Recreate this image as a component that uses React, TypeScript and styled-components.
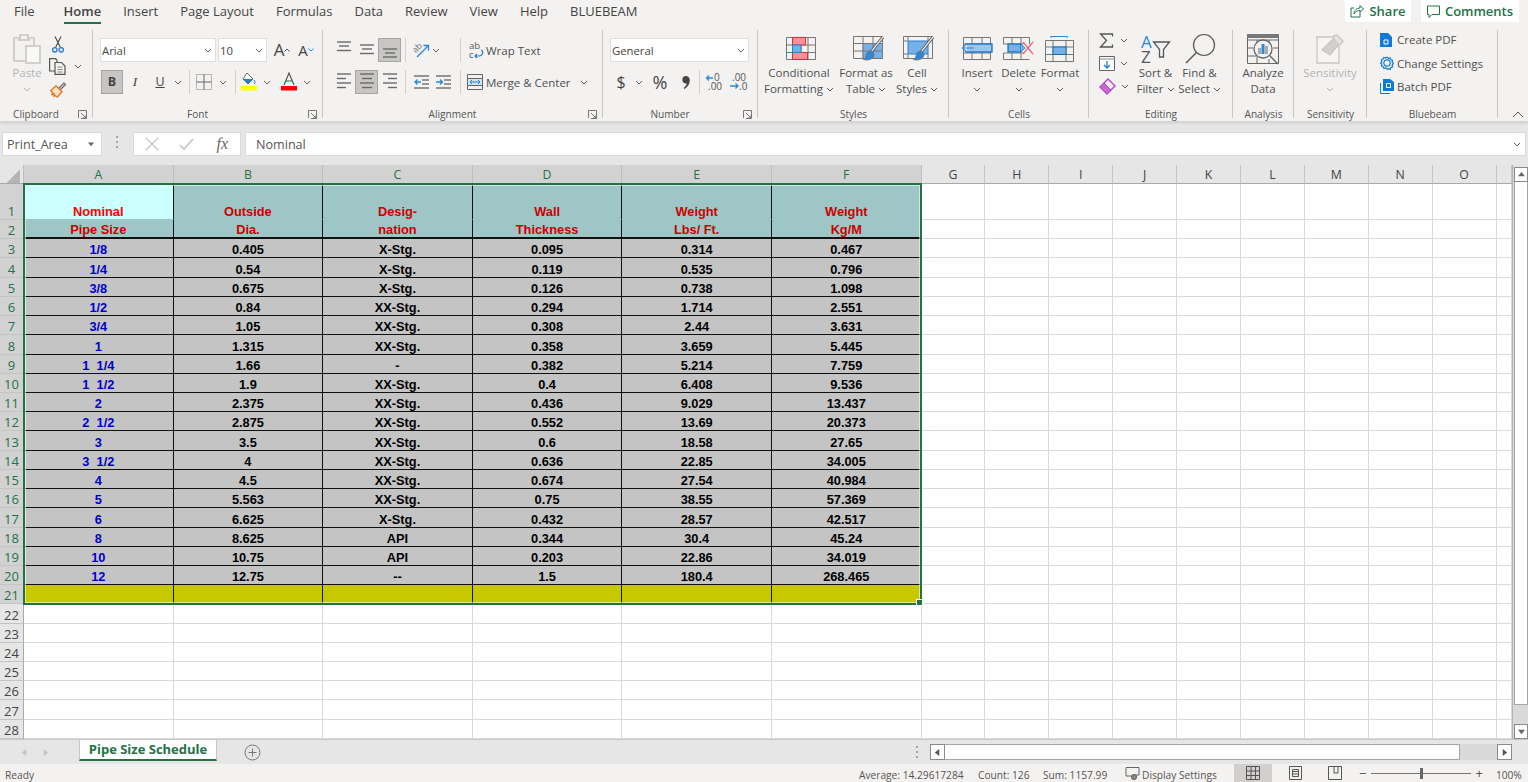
import React from "react";
import styled, { createGlobalStyle } from "styled-components";

const UI = `"Open Sans", "Noto Sans", "Liberation Sans", sans-serif`;
const GREEN = "#217346";
const INK = "#4a4a4a";

const Global = createGlobalStyle`
  html, body { margin: 0; padding: 0; background: #e6e6e6; }
  * { box-sizing: border-box; }
`;

const Page = styled.div`
  width: 1528px; height: 782px; overflow: hidden; display: flex; flex-direction: column;
  font-family: ${UI}; color: ${INK}; background: #e6e6e6;
`;

/* ---------- title tabs ---------- */
const TabStrip = styled.div`
  height: 24px; background: #f3f2f1; display: flex; padding: 0 9px 0 14px; align-items: flex-start;
`;
const MenuTab = styled.div<{ $active?: boolean; $gap: number }>`
  height: 24px; line-height: 23px; font-size: 13px; margin-right: ${p => p.$gap}px; color: #444;
  font-weight: ${p => (p.$active ? 600 : 400)};
  border-bottom: ${p => (p.$active ? `2px solid ${GREEN}` : "none")};
`;
const ShareBtn = styled.div<{ $w: number; $ml: string }>`
  width: ${p => p.$w}px; height: 22px; margin-left: ${p => p.$ml}; background: #fff; color: ${GREEN};
  font-weight: 600; font-size: 13px; display: flex; align-items: center; justify-content: center; gap: 5px;
`;

/* ---------- ribbon ---------- */
const Ribbon = styled.div`
  height: 97px; display: flex; background: #f3f2f1; box-shadow: 0 2px 3px rgba(0,0,0,.1); position: relative;
`;
const Group = styled.div<{ $w: number }>`
  width: ${p => p.$w}px; flex: none; display: flex; flex-direction: column; position: relative;
  &::after { content: ""; position: absolute; right: 0; top: 6px; bottom: 3px; width: 1px; background: #c8c6c4; }
`;
const GroupBody = styled.div<{ $pl?: number }>`
  flex: 1; display: flex; padding-left: ${p => p.$pl ?? 0}px; min-height: 0;
`;
const RowsBody = styled.div<{ $pl: number }>`
  flex: 1; display: flex; flex-direction: column; gap: 8px; padding: 14px 0 0 ${p => p.$pl}px;
`;
const Row = styled.div`
  display: flex; align-items: center; height: 24px;
`;
const LabelRow = styled.div`
  height: 15px; display: flex; align-items: center; padding-top: 1px; flex: none;
`;
const GroupLabel = styled.div`
  flex: 1; text-align: center; font-size: 10.1px; line-height: 14px; color: #555;
`;
const LauncherSlot = styled.div`
  width: 21px; display: flex; justify-content: center; flex: none;
`;
const Tool = styled.div<{ $w: number; $on?: boolean; $ml?: number }>`
  width: ${p => p.$w}px; height: 24px; flex: none; margin-left: ${p => p.$ml ?? 0}px; display: flex; align-items: center; justify-content: center;
  background: ${p => (p.$on ? "#c8c6c4" : "transparent")};
  outline: ${p => (p.$on ? "1px solid #a6a6a6" : "none")}; outline-offset: -1px;
`;
const Caret = styled.div<{ $ml?: number; $w?: number }>`
  width: ${p => p.$w ?? 10}px; flex: none; margin-left: ${p => p.$ml ?? 0}px; display: flex; justify-content: center;
`;
const Divider = styled.div<{ $ml: number; $mr: number }>`
  width: 1px; height: 24px; background: #d2d0ce; flex: none; margin: 0 ${p => p.$mr}px 0 ${p => p.$ml}px;
`;
const ComboBox = styled.div<{ $w: number; $ml?: number }>`
  width: ${p => p.$w}px; height: 24px; flex: none; margin-left: ${p => p.$ml ?? 0}px; background: #fff; border: 1px solid #e1dfdd;
  display: flex; align-items: center; justify-content: space-between; padding: 0 3px 0 1px;
  font-size: 11.3px; color: #444;
`;
const LetterGlyph = styled.span<{ $size: number; $serif?: boolean; $bold?: boolean; $italic?: boolean; $under?: boolean }>`
  font-family: ${p => (p.$serif ? `"Liberation Serif", serif` : UI)}; font-size: ${p => p.$size}px;
  font-weight: ${p => (p.$bold ? 700 : 400)}; font-style: ${p => (p.$italic ? "italic" : "normal")};
  text-decoration: ${p => (p.$under ? "underline" : "none")}; color: #444; line-height: 20px;
`;
const InlineText = styled.span<{ $ml?: number }>`
  font-size: 11.5px; color: #4f4f4f; margin-left: ${p => p.$ml ?? 0}px; white-space: nowrap;
`;
const BigBtn = styled.div<{ $w: number; $off?: boolean }>`
  width: ${p => p.$w}px; flex: none; display: flex; flex-direction: column; align-items: center; padding-top: 8px;
  color: ${p => (p.$off ? "#b4b4b4" : "#505050")};
`;
const BigIcon = styled.div<{ $dx?: number }>`
  height: 33px; display: flex; align-items: center; justify-content: center; flex: none; padding-left: ${p => (p.$dx ?? 0) * 2}px;
`;
const BigLine = styled.div`
  height: 16px; line-height: 16px; font-size: 11.5px; white-space: nowrap; display: flex; align-items: center; gap: 3px;
`;
const SmallStack = styled.div<{ $gap: number; $pt: number; $ml?: number; $w?: number }>`
  display: flex; flex-direction: column; gap: ${p => p.$gap}px; padding-top: ${p => p.$pt}px; margin-left: ${p => p.$ml ?? 0}px; flex: none;
  ${p => (p.$w ? `width:${p.$w}px;` : "")}
`;
const StackItem = styled.div<{ $h?: number; $pl?: number }>`
  display: flex; align-items: center; height: ${p => p.$h ?? 22}px; padding-left: ${p => p.$pl ?? 0}px;
`;
const Collapse = styled.div`
  position: absolute; right: 4px; bottom: 3px;
`;

/* ---------- formula bar ---------- */
const FormulaArea = styled.div`
  height: 44px; background: #e6e6e6; display: flex; padding: 11px 2px 0 2px; flex: none; align-items: flex-start;
`;
const FieldBox = styled.div<{ $w?: number; $grow?: boolean; $ml: number }>`
  height: 24px; background: #fff; margin-left: ${p => p.$ml}px;
  ${p => (p.$w ? `width:${p.$w}px; flex:none;` : "")} ${p => (p.$grow ? "flex:1;" : "")}
  display: flex; align-items: center; justify-content: space-between; font-size: 12.6px; color: #555; border: 1px solid #dcdcdc;
`;
const NamePad = styled.span` padding-left: 4px; `;
const NameArrow = styled.span` padding-right: 7px; display: flex; `;
const Grip = styled.div`
  width: 2px; height: 14px; margin: 4px 0 0 14px; flex: none;
  background: repeating-linear-gradient(#a6a6a6 0 2px, transparent 2px 5px);
`;
const FxSlot = styled.div` flex: 1; display: flex; justify-content: center; align-items: center; `;
const FxText = styled.span`
  font-family: "Liberation Serif", serif; font-style: italic; font-size: 16px; color: #666;
`;
const FormulaText = styled.span` padding-left: 10px; `;
const EndArrow = styled.span` padding-right: 4px; display: flex; `;

/* ---------- sheet ---------- */
const SheetArea = styled.div`
  flex: 1; display: flex; min-height: 0; background: #fff;
`;
const SheetGrid = styled.div`
  width: 1513px; flex: none; display: grid; position: relative; overflow: hidden; border-right: 1px solid #b4b4b4;
  grid-template-columns: 24px repeat(6, 149.6px) repeat(9, 63.9px) 1fr;
  grid-template-rows: 19px 36px repeat(27, 19.22px);
`;
const Corner = styled.div`
  background: #e6e6e6 linear-gradient(135deg, transparent 52%, #b5b5b5 52%) no-repeat 6px 4px / 14px 14px;
  border-right: 1px solid #bdbdbd; border-bottom: 1px solid #a9a9a9;
`;
const ColHead = styled.div<{ $sel: boolean }>`
  background: ${p => (p.$sel ? "#d2d2d2" : "#e6e6e6")}; color: ${p => (p.$sel ? GREEN : "#444")};
  display: flex; align-items: center; justify-content: center; font-size: 12.3px;
  border-right: 1px solid ${p => (p.$sel ? "#bdbdbd" : "#c4c4c4")}; border-bottom: 1px solid #a9a9a9;
`;
const RowHead = styled.div<{ $sel: boolean }>`
  background: ${p => (p.$sel ? "#d2d2d2" : "#e6e6e6")}; color: ${p => (p.$sel ? GREEN : "#444")};
  display: flex; align-items: flex-end; justify-content: center; font-size: 13px; line-height: 16px;
  border-right: 1px solid #a9a9a9; border-bottom: 1px solid #c4c4c4;
`;
const DataCell = styled.div<{ $bg: string; $ink: string; $thick?: boolean; $rowEnd?: string }>`
  background: ${p => p.$bg}; color: ${p => p.$ink};
  font: 700 12.8px/15px "Liberation Sans", Arial, sans-serif; white-space: pre;
  display: flex; align-items: flex-end; justify-content: center;
  border-bottom: ${p => (p.$thick ? 2 : 1)}px solid ${p => p.$rowEnd ?? "#111"};
  border-right: 1.6px solid #111;
  min-width: 0; min-height: 0;
`;
const EmptyCell = styled.div`
  background: #fff; border-right: 1px solid #d9d9d9; border-bottom: 1px solid #d9d9d9;
`;
const Selection = styled.div`
  position: absolute; left: 23px; top: 18px; width: 899px; height: 422px; border: 2px solid ${GREEN};
  box-shadow: inset 0 0 0 1px rgba(255,255,255,.55); pointer-events: none;
  &::after {
    content: ""; position: absolute; right: -3px; bottom: -3px; width: 5px; height: 5px; background: ${GREEN}; border: 1px solid #fff;
  }
`;
const VScroll = styled.div`
  flex: 1; background: #d9d9d9; display: flex; flex-direction: column; padding-left: 1px;
`;
const VCap = styled.div`
  height: 2px; flex: none; background: #e6e6e6;
`;
const ScrollBtn = styled.div`
  height: 15px; flex: none; background: #fff; border: 1px solid #8a8a8a; display: flex; align-items: center; justify-content: center;
`;
const VThumb = styled.div`
  height: 523px; flex: none; background: #fff; border: 1px solid #a6a6a6; border-top: none;
`;
const VGap = styled.div` flex: 1; `;

/* ---------- sheet bar ---------- */
const SheetBar = styled.div`
  height: 25px; flex: none; background: #e6e6e6; display: flex; align-items: flex-start; border-top: 1px solid #c8c8c8;
`;
const NavArrows = styled.div`
  width: 79px; height: 24px; flex: none; display: flex; gap: 14px; align-items: center; padding-left: 21px;
`;
const SheetTab = styled.div`
  width: 138px; height: 21px; background: #fff; color: ${GREEN}; font-weight: 700; font-size: 13px; text-align: center; line-height: 19px;
  border-bottom: 2px solid ${GREEN}; border-left: 1px solid #c8c8c8; border-right: 1px solid #c8c8c8; flex: none;
`;
const AddSheet = styled.div`
  margin: 4px 0 0 27px; flex: none; display: flex;
`;
const BarGrip = styled.div`
  width: 2px; height: 13px; margin: 6px 0 0 655px; flex: none;
  background: repeating-linear-gradient(#a6a6a6 0 2px, transparent 2px 5px);
`;
const HScroll = styled.div`
  margin: 4px 0 0 12px; width: 582px; height: 16px; display: flex; flex: none;
`;
const HBtn = styled.div`
  width: 15px; background: #fff; border: 1px solid #8a8a8a; display: flex; align-items: center; justify-content: center; flex: none;
`;
const HThumb = styled.div` width: 515px; background: #fff; border: 1px solid #a6a6a6; border-left: none; flex: none; `;
const HTrack = styled.div` flex: 1; background: #d9d9d9; `;

/* ---------- status bar ---------- */
const Status = styled.div`
  height: 18px; flex: none; background: #f3f2f1; display: flex; align-items: center; font-size: 10.2px; color: #555; padding-left: 5px;
`;
const StatusItem = styled.span<{ $w?: number; $ml?: number; $big?: boolean }>`
  ${p => (p.$w ? `width:${p.$w}px;` : "")} margin-left: ${p => p.$ml ?? 0}px; flex: none; white-space: nowrap; padding-top: ${p => (p.$big ? 1 : 4)}px;
  ${p => (p.$big ? "font-size: 13px; line-height: 15px;" : "")}
`;
const ViewBtn = styled.div<{ $on?: boolean; $w: number; $ml?: number }>`
  width: ${p => p.$w}px; margin-left: ${p => p.$ml ?? 0}px; height: 18px; flex: none; display: flex; align-items: center; justify-content: center;
  background: ${p => (p.$on ? "#d2d0ce" : "transparent")};
`;
const Slider = styled.div`
  width: 100px; height: 1px; background: #777; margin-left: 5px; flex: none; position: relative;
  &::after { content: ""; position: absolute; left: 49px; top: -5px; width: 3px; height: 11px; background: #666; }
`;
const Svg = styled.svg` display: block; flex: none; overflow: visible; `;

/* ---------- icons ---------- */
const Chevron = ({ c = "#605e5c" }: { c?: string }) => (
  <Svg width="8" height="5" viewBox="0 0 8 5"><path d="M1 1l3 3 3-3" fill="none" stroke={c} strokeWidth="1" /></Svg>
);
const Launcher = () => (
  <Svg width="9" height="9" viewBox="0 0 9 9" fill="none" stroke="#777"><path d="M.5 8V.5H8.5V8.5H3M3 3l5 5M8 5v3H5" /></Svg>
);
const PasteIcon = () => (
  <Svg width="28" height="30" viewBox="0 0 28 30" fill="none" stroke="#c8c6c4" strokeWidth="1.600">
    <path d="M14 27H1V4h5M16 4h5v7" />
    <path d="M7 4V1h8v3l1 2H6z" fill="#f3f2f1" />
    <rect x="13" y="12" width="14" height="17" fill="#f8f8f7" />
  </Svg>
);
const CutIcon = () => (
  <Svg width="12" height="17" viewBox="0 0 12 17" fill="none">
    <path d="M3 .5l5.500 11M9 .5L3.500 11.500" stroke="#444" strokeWidth="1.100" />
    <circle cx="2.800" cy="13.800" r="2.200" stroke="#2b7cd3" strokeWidth="1.300" />
    <circle cx="9.200" cy="13.800" r="2.200" stroke="#2b7cd3" strokeWidth="1.300" />
  </Svg>
);
const CopyIcon = () => (
  <Svg width="17" height="17" viewBox="0 0 17 17" fill="none" stroke="#555" strokeWidth="1.200">
    <path d="M6 13H.6V.6h6l1.500 2V4" />
    <path d="M6 4.500h6.500l3.500 3.500v8.400H6z" fill="#f3f2f1" />
    <path d="M8.500 9h5M8.500 11.500h5M8.500 14h5" stroke="#888" />
  </Svg>
);
const PainterIcon = () => (
  <Svg width="16" height="16" viewBox="0 0 16 16" fill="none">
    <path d="M.8 8.500L6 4l6 5.500L7.500 15 5 13.500l-1 .5.300-2-2.300.500.700-2z" fill="#fbe3c7" stroke="#e8761f" strokeWidth="1.400" />
    <path d="M9 6l5-5 1.500 1.500-5 5" stroke="#666" strokeWidth="1.200" />
  </Svg>
);
const BordersIcon = () => (
  <Svg width="16" height="16" viewBox="0 0 16 16" fill="none">
    <path d="M.5.5h15v15H.5z" stroke="#b5b5b5" />
    <path d="M8 .5v15M.5 8h15" stroke="#666" />
  </Svg>
);
const FillIcon = () => (
  <Svg width="16" height="18" viewBox="0 0 16 18" fill="none">
    <path d="M6 0l6 6-5 5-5-5z" fill="#fff" stroke="#666" />
    <path d="M2 6h10l-5 5z" fill="#2b7cd3" />
    <path d="M13 7c1.500 2 1.500 3.500 0 4" stroke="#2b7cd3" />
    <rect x="0" y="13" width="16" height="4.500" fill="#ffff00" />
  </Svg>
);
const FontColorIcon = () => (
  <Svg width="16" height="18" viewBox="0 0 16 18" fill="none">
    <path d="M3 12L8 0l5 12M5 8h6" stroke="#555" strokeWidth="1.200" />
    <rect y="13" width="16" height="4.500" fill="#ff0000" />
  </Svg>
);
const TextLines = ({ rows }: { rows: [number, number, number][] }) => (
  <Svg width="16" height="18" viewBox="0 0 16 18" fill="none" stroke="#6a6a6a" strokeWidth="1.400">
    {rows.map(([a, b, y]) => <path key={y} d={`M${a} ${y}H${b}`} />)}
  </Svg>
);
const OrientIcon = () => (
  <Svg width="17" height="16" viewBox="0 0 17 16" fill="none">
    <text x="0" y="9" fontSize="8.500" fontFamily="Open Sans" fill="#666" transform="rotate(-45 4 7)">ab</text>
    <path d="M4 15L15 4M10.500 3.500H15.500V8.500" stroke="#2b88d8" strokeWidth="1.300" />
  </Svg>
);
const WrapIcon = () => (
  <Svg width="15" height="20" viewBox="0 0 15 20" fill="none">
    <text x="0" y="9" fontSize="9.500" fontFamily="Open Sans" fill="#555">ab</text>
    <text x="0" y="18" fontSize="9.500" fontFamily="Open Sans" fill="#555">c</text>
    <path d="M12 10c3 1 2 6-2 6H6M8 14l-2 2 2 2" stroke="#2b7cd3" strokeWidth="1.200" />
  </Svg>
);
const IndentIcon = ({ flip }: { flip?: boolean }) => (
  <Svg width="15" height="14" viewBox="0 0 15 14" fill="none">
    <path d="M0 1h15M8 5h7M8 9h7M0 13h15" stroke="#777" strokeWidth="1.300" />
    <path d={flip ? "M0 7h6M4 4.500L6.500 7 4 9.500" : "M7 7H1M3.500 4.500L1 7l2.500 2.500"} stroke="#2b88d8" strokeWidth="1.400" />
  </Svg>
);
const MergeIcon = () => (
  <Svg width="16" height="16" viewBox="0 0 16 16" fill="none">
    <path d="M.5.5h15v15H.5zM.5 4.500h15M.5 11.500h15" stroke="#666" />
    <rect x="1" y="5" width="14" height="6" fill="#cfe4f7" />
    <path d="M3 8h10M5 6L3 8l2 2M11 6l2 2-2 2" stroke="#2b7cd3" />
  </Svg>
);
const CommaIcon = () => (
  <Svg width="8" height="13" viewBox="0 0 8 13"><path d="M3.800 0C6.200 0 7.800 1.700 7.800 4.500 7.800 8 5.800 11 2.500 13L1.600 12C3.500 10.500 4.600 9 4.800 7.500 2.300 7.800.3 6.300.3 3.800.3 1.500 1.800 0 3.800 0z" fill="#444" /></Svg>
);
const DecimalIcon = ({ more }: { more?: boolean }) => (
  <Svg width="18" height="18" viewBox="0 0 18 18" fill="none">
    {more ? (
      <>
        <text x="9" y="8" fontSize="10" fontFamily="Open Sans" fill="#555">0</text>
        <text x="3" y="17" fontSize="10" fontFamily="Open Sans" fill="#555">.00</text>
        <path d="M8 5H1.500M4 2.500L1.500 5 4 7.500" stroke="#2b88d8" strokeWidth="1.300" />
      </>
    ) : (
      <>
        <text x="3" y="8" fontSize="10" fontFamily="Open Sans" fill="#555">.00</text>
        <text x="10" y="17" fontSize="10" fontFamily="Open Sans" fill="#555">.0</text>
        <path d="M1 13h8M6.500 10.500L9 13l-2.500 2.500" stroke="#2b88d8" strokeWidth="1.300" />
      </>
    )}
  </Svg>
);
const CondIcon = () => (
  <Svg width="30" height="24" viewBox="0 0 30 24" fill="none" stroke="#777">
    <path d="M.5.500h29v22H.5zM.5 8h29M.5 15.500h29M8 .500v22M15 .500v22M22 .500v22" />
    <rect x="6.500" y=".500" width="13" height="7.500" fill="#ff8f94" stroke="#d13438" />
    <rect x="6.500" y="15.500" width="15" height="7" fill="#ff8f94" stroke="#d13438" />
    <rect x="6.500" y="8" width="8.500" height="7.500" fill="#75b0e6" stroke="#2b7cd3" />
  </Svg>
);
const Brush = () => (
  <>
    <path d="M30 1L18 16" stroke="#666" strokeWidth="3" />
    <path d="M30 1L18 16" stroke="#fff" strokeWidth="1.200" />
    <path d="M18 15c-3 0-5 2-5 5 0 2-2 3-3 3 3 2 10 1 11-4 0-2-1-4-3-4z" fill="#2b88d8" />
  </>
);
const TableIcon = () => (
  <Svg width="32" height="26" viewBox="0 0 32 26" fill="none" stroke="#777">
    <rect x="9.500" y="7.500" width="20" height="15" fill="#75b0e6" stroke="none" />
    <path d="M.5.500h29v22H.5zM.5 7.500h29M.5 15h29M10 .500v22M20 .500v22" />
    <Brush />
  </Svg>
);
const CellStylesIcon = () => (
  <Svg width="32" height="26" viewBox="0 0 32 26" fill="none" stroke="#777">
    <rect x="5" y="5" width="20" height="13" fill="#75b0e6" stroke="#2b7cd3" />
    <path d="M.5.500h29v22H.5z" />
    <path d="M.5 5h4M.5 18h4M25 5h4M5 .500V5M25 .500V5M5 18v4M25 18v4" />
    <Brush />
  </Svg>
);
const InsertIcon = () => (
  <Svg width="32" height="24" viewBox="0 0 32 24" fill="none" stroke="#777">
    <path d="M2.500.500h27v22h-27zM2.500 7h27M2.500 16h27M11 .500v22M21 .500v22" />
    <rect x="5" y="7" width="26" height="8" fill="#9cc6ee" stroke="#106ebe" strokeWidth="1.300" />
    <path d="M13 11H1.500M6 6.500L1.500 11 6 15.500" stroke="#2b88d8" strokeWidth="1.200" fill="#f3f2f1" />
  </Svg>
);
const DeleteIcon = () => (
  <Svg width="31" height="24" viewBox="0 0 31 24" fill="none" stroke="#777">
    <path d="M.5.500h26M.5 22.500h26M.5.500V7M.5 16v6.500M9 .500V7M18 .500V7M9 16v6.500M18 16v6.500M26.500.500V7M.5 7h20M.5 16h20" />
    <rect x="5" y="7" width="13" height="8" fill="#75b0e6" stroke="#106ebe" strokeWidth="1.200" />
    <path d="M18 7l4 4-4 4" fill="#75b0e6" stroke="#2b88d8" />
    <path d="M20 5l10 12M30 5L20 17" stroke="#f0696c" strokeWidth="1.300" />
  </Svg>
);
const FormatIcon = () => (
  <Svg width="30" height="26" viewBox="0 0 30 26" fill="none" stroke="#777">
    <path d="M6 .500h16M6 0v2M22 0v2" stroke="#2b88d8" />
    <path d="M.5 4.500h28v21H.5zM.5 11h28M.5 18.500h28M8 4.500v21M21 4.500v21" />
    <rect x="8" y="11" width="13" height="7.500" fill="#75b0e6" stroke="#106ebe" />
  </Svg>
);
const SigmaIcon = () => (
  <Svg width="15" height="15" viewBox="0 0 15 15" fill="none"><path d="M13.500 3.500V1H1.500L7.500 7.500 1.500 14h12v-2.500" stroke="#555" strokeWidth="1.300" /></Svg>
);
const FillDownIcon = () => (
  <Svg width="16" height="15" viewBox="0 0 16 15" fill="none">
    <path d="M.5.500h15v14H.5z" stroke="#666" fill="#fff" />
    <path d="M.5 3h15" stroke="#888" />
    <path d="M8 5v7M5 9l3 3 3-3" stroke="#2b7cd3" strokeWidth="1.300" />
  </Svg>
);
const EraserIcon = () => (
  <Svg width="17" height="17" viewBox="0 0 17 17" fill="none">
    <path d="M1 9l8-8 7 7-8 8z" fill="#fbeefc" stroke="#b146c2" strokeWidth="1.400" />
    <path d="M1 9l4-4 7 7-4 4z" fill="#c768d4" stroke="#b146c2" />
  </Svg>
);
const SortIcon = () => (
  <Svg width="29" height="28" viewBox="0 0 29 28" fill="none">
    <text x="0" y="13" fontSize="17" fontFamily="Open Sans" fill="#2b88d8">A</text>
    <text x="0" y="28" fontSize="17" fontFamily="Open Sans" fill="#555">Z</text>
    <path d="M12.500 7h16l-6 7.500V22h-4v-7.500z" stroke="#555" strokeWidth="1.300" fill="#f3f2f1" />
  </Svg>
);
const FindIcon = () => (
  <Svg width="32" height="32" viewBox="0 0 32 32" fill="none" stroke="#555" strokeWidth="1.200">
    <circle cx="20" cy="12" r="10.500" />
    <path d="M12.500 19.500L2 30" strokeWidth="1.400" />
  </Svg>
);
const AnalyzeIcon = () => (
  <Svg width="34" height="32" viewBox="0 0 34 32" fill="none" stroke="#666">
    <path d="M1.500 1.500h31v29h-31zM1.500 7h31M1.500 15h6M27 15h5.500M1.500 23h10M11 7v4M23 7v4M11 24v6M23 26v4" />
    <path d="M1 1h32v4H1z" fill="#777" stroke="none" />
    <circle cx="17" cy="16" r="9" fill="#f3f2f1" strokeWidth="1.300" />
    <path d="M23.500 22.500L32 31" strokeWidth="1.300" />
    <rect x="12" y="15" width="3" height="6" fill="#aaa" stroke="none" />
    <rect x="15.500" y="11" width="3" height="10" fill="#2b88d8" stroke="none" />
    <rect x="19" y="13" width="3" height="8" fill="#aaa" stroke="none" />
  </Svg>
);
const SensitivityIcon = () => (
  <Svg width="28" height="30" viewBox="0 0 28 30" fill="none" stroke="#c8c6c4" strokeWidth="1.300">
    <path d="M1 3h18l4 4v22H1z" fill="#f6f5f4" />
    <path d="M6 16L18 4l8 3-12 14z" fill="#d2d0ce" />
    <path d="M17 2l4-1 6 6-3 4" fill="#e5e4e3" />
  </Svg>
);
const PdfIcon = () => (
  <Svg width="12" height="14" viewBox="0 0 12 14"><path d="M0 0h8l4 4v10H0z" fill="#0f7ad6" /><path d="M4 7h4v4H4z" fill="none" stroke="#fff" /></Svg>
);
const GearIcon = () => (
  <Svg width="14" height="14" viewBox="0 0 14 14" fill="none" stroke="#0f7ad6" strokeWidth="1.200">
    <circle cx="7" cy="7" r="3.200" />
    <path d="M7 1.200l1.400 1.200 1.800-.4.700 1.700 1.700.7-.4 1.800 1.200 1.400-1.200 1.400.4 1.800-1.700.700-.7 1.700-1.800-.4L7 13l-1.400-1.200-1.800.4-.7-1.700-1.700-.7.4-1.800L.6 7l1.200-1.400-.4-1.800 1.700-.7.7-1.700 1.800.4z" />
  </Svg>
);
const BatchIcon = () => (
  <Svg width="14" height="15" viewBox="0 0 14 15" fill="none">
    <path d="M.5 4v10.500H10" stroke="#0f7ad6" />
    <path d="M3 0h7l4 3v9H3z" fill="#0f7ad6" />
    <path d="M6.500 4.500h4v4h-4z" stroke="#fff" />
  </Svg>
);
const ShareIcon = () => (
  <Svg width="14" height="14" viewBox="0 0 14 14" fill="none" stroke={GREEN}>
    <path d="M10 8v5H1V4h3" />
    <path d="M4 10c0-4 3-6 6-6V1.500l3.500 3.500L10 8V6.500C7.500 6.500 5.500 7.500 4 10z" />
  </Svg>
);
const CommentIcon = () => (
  <Svg width="13" height="13" viewBox="0 0 13 13" fill="none" stroke={GREEN}><path d="M.5 1h12v8.500H5l-3 3v-3H.5z" /></Svg>
);
const Cross = () => (
  <Svg width="14" height="14" viewBox="0 0 14 14"><path d="M1 1l12 12M13 1L1 13" stroke="#c4c4c4" strokeWidth="1.300" /></Svg>
);
const Check = () => (
  <Svg width="15" height="12" viewBox="0 0 15 12"><path d="M1 7l4 4 9-10" fill="none" stroke="#c4c4c4" strokeWidth="1.600" /></Svg>
);
const Tri = ({ d, c = "#666", s = 7 }: { d: "up" | "down" | "left" | "right"; c?: string; s?: number }) => {
  const pts = { up: "0,6 4,1 8,6", down: "0,2 8,2 4,7", left: "6,0 6,8 1,4", right: "2,0 2,8 7,4" }[d];
  return <Svg width={s} height={s} viewBox="0 0 8 8"><polygon points={pts} fill={c} /></Svg>;
};
const PlusCircle = () => (
  <Svg width="17" height="17" viewBox="0 0 17 17" fill="none" stroke="#777"><circle cx="8.500" cy="8.500" r="7.500" /><path d="M4.500 8.500h8M8.500 4.500v8" /></Svg>
);
const DisplayIcon = () => (
  <Svg width="15" height="15" viewBox="0 0 15 15" fill="none" stroke="#666">
    <path d="M1 10V1.500h13V9H9M1 10h6" />
    <circle cx="9" cy="11" r="2.600" fill="#888" />
  </Svg>
);
const NormalViewIcon = () => (
  <Svg width="14" height="14" viewBox="0 0 14 14" fill="none" stroke="#555"><path d="M.5.500h13v13H.5zM.5 5h13M.5 9.500h13M5 .500v13M9.500 .500v13" /></Svg>
);
const PageViewIcon = () => (
  <Svg width="13" height="14" viewBox="0 0 13 14" fill="none" stroke="#555"><path d="M.5.500h12v13H.5zM3.500 3.500h6v7h-6zM3.500 5.500h6M3.500 8h6" /></Svg>
);
const BreakViewIcon = () => (
  <Svg width="14" height="14" viewBox="0 0 14 14" fill="none" stroke="#555"><path d="M.5.500h13v13H.5zM6 .500v6.500h4V.500" /></Svg>
);

/* ---------- data ---------- */
const COLS = "ABCDEFGHIJKLMNO".split("");
const HEAD: [string, string][] = [
  ["Nominal", "Pipe Size"], ["Outside", "Dia."], ["Desig-", "nation"], ["Wall", "Thickness"], ["Weight", "Lbs/ Ft."], ["Weight", "Kg/M"],
];
const BODY: string[][] = [
  ["1/8", "0.405", "X-Stg.", "0.095", "0.314", "0.467"],
  ["1/4", "0.54", "X-Stg.", "0.119", "0.535", "0.796"],
  ["3/8", "0.675", "X-Stg.", "0.126", "0.738", "1.098"],
  ["1/2", "0.84", "XX-Stg.", "0.294", "1.714", "2.551"],
  ["3/4", "1.05", "XX-Stg.", "0.308", "2.44", "3.631"],
  ["1", "1.315", "XX-Stg.", "0.358", "3.659", "5.445"],
  ["1  1/4", "1.66", "-", "0.382", "5.214", "7.759"],
  ["1  1/2", "1.9", "XX-Stg.", "0.4", "6.408", "9.536"],
  ["2", "2.375", "XX-Stg.", "0.436", "9.029", "13.437"],
  ["2  1/2", "2.875", "XX-Stg.", "0.552", "13.69", "20.373"],
  ["3", "3.5", "XX-Stg.", "0.6", "18.58", "27.65"],
  ["3  1/2", "4", "XX-Stg.", "0.636", "22.85", "34.005"],
  ["4", "4.5", "XX-Stg.", "0.674", "27.54", "40.984"],
  ["5", "5.563", "XX-Stg.", "0.75", "38.55", "57.369"],
  ["6", "6.625", "X-Stg.", "0.432", "28.57", "42.517"],
  ["8", "8.625", "API", "0.344", "30.4", "45.24"],
  ["10", "10.75", "API", "0.203", "22.86", "34.019"],
  ["12", "12.75", "--", "1.5", "180.4", "268.465"],
];
const TEAL = "#9fc6c6";
const BODY_BG = "#c4c4c4";
const OLIVE = "#c8c800";
const EMPTY_COLS = Array.from({ length: 10 });

const MENU: [string, number, boolean?][] = [
  ["File", 29], ["Home", 22, true], ["Insert", 22], ["Page Layout", 22], ["Formulas", 22], ["Data", 22], ["Review", 22], ["View", 22], ["Help", 22], ["BLUEBEAM", 0],
];

const GroupFoot = ({ label, launcher }: { label: string; launcher?: boolean }) => (
  <LabelRow>
    <GroupLabel>{label}</GroupLabel>
    {launcher && <LauncherSlot><Launcher /></LauncherSlot>}
  </LabelRow>
);

const Big = ({ w, icon, a, b, off, noB, dx }: { w: number; icon: React.ReactNode; a: string; b?: string; off?: boolean; noB?: boolean; dx?: number }) => (
  <BigBtn $w={w} $off={off}>
    <BigIcon $dx={dx}>{icon}</BigIcon>
    <BigLine>{a}</BigLine>
    <BigLine>{b}{!noB && <Chevron c={off ? "#b4b4b4" : "#605e5c"} />}</BigLine>
  </BigBtn>
);

function Sheet() {
  return (
    <SheetGrid>
      <Corner />
      {COLS.map((c, i) => <ColHead key={c} $sel={i < 6}>{c}</ColHead>)}
      <ColHead $sel={false} />

      <RowHead $sel>1</RowHead>
      {HEAD.map(([a], i) => (
        <DataCell key={i} $bg={i === 0 ? "#ccffff" : TEAL} $ink={i === 0 ? "#ff0000" : "#cc0000"} $rowEnd={TEAL}>{a}</DataCell>
      ))}
      {EMPTY_COLS.map((_, i) => <EmptyCell key={i} />)}

      <RowHead $sel>2</RowHead>
      {HEAD.map(([, b], i) => <DataCell key={i} $bg={TEAL} $ink="#cc0000" $thick>{b}</DataCell>)}
      {EMPTY_COLS.map((_, i) => <EmptyCell key={i} />)}

      {BODY.map((row, r) => (
        <React.Fragment key={r}>
          <RowHead $sel>{r + 3}</RowHead>
          {row.map((v, i) => <DataCell key={i} $bg={BODY_BG} $ink={i === 0 ? "#0000cc" : "#000"}>{v}</DataCell>)}
          {EMPTY_COLS.map((_, i) => <EmptyCell key={i} />)}
        </React.Fragment>
      ))}

      <RowHead $sel>21</RowHead>
      {HEAD.map((_, i) => <DataCell key={i} $bg={OLIVE} $ink="#000" $rowEnd={OLIVE} />)}
      {EMPTY_COLS.map((_, i) => <EmptyCell key={i} />)}

      {[22, 23, 24, 25, 26, 27, 28].map(n => (
        <React.Fragment key={n}>
          <RowHead $sel={false}>{n}</RowHead>
          {Array.from({ length: 16 }).map((_, i) => <EmptyCell key={i} />)}
        </React.Fragment>
      ))}
      <Selection />
    </SheetGrid>
  );
}

export default function App() {
  return (
    <Page>
      <Global />
      <TabStrip>
        {MENU.map(([t, g, a]) => <MenuTab key={t} $gap={g} $active={a}>{t}</MenuTab>)}
        <ShareBtn $w={66} $ml="auto"><ShareIcon />Share</ShareBtn>
        <ShareBtn $w={98} $ml="10px"><CommentIcon />Comments</ShareBtn>
      </TabStrip>

      <Ribbon>
        <Group $w={93}>
          <GroupBody $pl={13}>
            <BigBtn $w={28} $off>
              <BigIcon><PasteIcon /></BigIcon>
              <BigLine>Paste</BigLine>
              <BigLine><Chevron c="#b4b4b4" /></BigLine>
            </BigBtn>
            <SmallStack $gap={0} $pt={10} $ml={8}>
              <StackItem $h={20} $pl={3}><CutIcon /></StackItem>
              <StackItem $h={24}><CopyIcon /><Caret $w={23}><Chevron /></Caret></StackItem>
              <StackItem $h={24} $pl={1}><PainterIcon /></StackItem>
            </SmallStack>
          </GroupBody>
          <GroupFoot label="Clipboard" launcher />
        </Group>

        <Group $w={230}>
          <RowsBody $pl={7}>
            <Row>
              <ComboBox $w={116}>Arial<Chevron /></ComboBox>
              <ComboBox $w={49} $ml={2}>10<Chevron /></ComboBox>
              <Tool $w={24} $ml={3}><LetterGlyph $size={17}>A</LetterGlyph><Svg width="6" height="4" viewBox="0 0 6 4"><path d="M.5 3.500L3 1l2.500 2.500" fill="none" stroke="#555" /></Svg></Tool>
              <Tool $w={24}><LetterGlyph $size={15}>A</LetterGlyph><Svg width="6" height="4" viewBox="0 0 6 4"><path d="M.5 .5L3 3l2.500-2.500" fill="none" stroke="#2b88d8" /></Svg></Tool>
            </Row>
            <Row>
              <Tool $w={22} $ml={1} $on><LetterGlyph $size={12.500} $bold>B</LetterGlyph></Tool>
              <Tool $w={24}><LetterGlyph $size={13.500} $serif $italic>I</LetterGlyph></Tool>
              <Tool $w={26}><LetterGlyph $size={12.500} $under>U</LetterGlyph></Tool>
              <Caret><Chevron /></Caret>
              <Divider $ml={6} $mr={0} />
              <Tool $w={28}><BordersIcon /></Tool>
              <Caret><Chevron /></Caret>
              <Divider $ml={7} $mr={0} />
              <Tool $w={26}><FillIcon /></Tool>
              <Caret><Chevron /></Caret>
              <Tool $w={26} $ml={4}><FontColorIcon /></Tool>
              <Caret $w={9}><Chevron /></Caret>
            </Row>
          </RowsBody>
          <GroupFoot label="Font" launcher />
        </Group>

        <Group $w={280}>
          <RowsBody $pl={9}>
            <Row>
              <Tool $w={23}><TextLines rows={[[1, 15, 1], [3, 13, 5], [1, 15, 9.500]]} /></Tool>
              <Tool $w={23}><TextLines rows={[[1, 15, 4], [3, 13, 8], [1, 15, 12.500]]} /></Tool>
              <Tool $w={23} $on><TextLines rows={[[1, 15, 8], [3, 13, 12], [1, 15, 16]]} /></Tool>
              <Divider $ml={4} $mr={4} />
              <Tool $w={22}><OrientIcon /></Tool>
              <Caret $w={8}><Chevron /></Caret>
              <Divider $ml={20} $mr={8} />
              <WrapIcon />
              <InlineText $ml={2}>Wrap Text</InlineText>
            </Row>
            <Row>
              <Tool $w={23}><TextLines rows={[[1, 15, 1], [1, 10, 5.500], [1, 15, 10], [1, 10, 14.500]]} /></Tool>
              <Tool $w={23} $on><TextLines rows={[[1, 15, 1], [3, 13, 5.500], [1, 15, 10], [3, 13, 14.500]]} /></Tool>
              <Tool $w={23}><TextLines rows={[[1, 15, 1], [6, 15, 5.500], [1, 15, 10], [6, 15, 14.500]]} /></Tool>
              <Divider $ml={4} $mr={4} />
              <Tool $w={22}><IndentIcon /></Tool>
              <Tool $w={22}><IndentIcon flip /></Tool>
              <Divider $ml={6} $mr={6} />
              <MergeIcon />
              <InlineText $ml={3}>Merge &amp; Center</InlineText>
              <Caret $ml={8}><Chevron /></Caret>
            </Row>
          </RowsBody>
          <GroupFoot label="Alignment" launcher />
        </Group>

        <Group $w={155}>
          <RowsBody $pl={7}>
            <Row>
              <ComboBox $w={139}>General<Chevron /></ComboBox>
            </Row>
            <Row>
              <Tool $w={16} $ml={3}><LetterGlyph $size={16}>$</LetterGlyph></Tool>
              <Caret $ml={5}><Chevron /></Caret>
              <Tool $w={22} $ml={5}><LetterGlyph $size={18}>%</LetterGlyph></Tool>
              <Tool $w={20} $ml={5}><CommaIcon /></Tool>
              <Divider $ml={3} $mr={4} />
              <Tool $w={20}><DecimalIcon more /></Tool>
              <Tool $w={20} $ml={4}><DecimalIcon /></Tool>
            </Row>
          </RowsBody>
          <GroupFoot label="Number" launcher />
        </Group>

        <Group $w={191}>
          <GroupBody>
            <Big w={82} dx={2} icon={<CondIcon />} a="Conditional" b="Formatting" />
            <Big w={52} dx={3} icon={<TableIcon />} a="Format as" b="Table" />
            <Big w={50} dx={2} icon={<CellStylesIcon />} a="Cell" b="Styles" />
          </GroupBody>
          <GroupFoot label="Styles" />
        </Group>

        <Group $w={140}>
          <GroupBody $pl={7}>
            <Big w={42} icon={<InsertIcon />} a="Insert" />
            <Big w={41} icon={<DeleteIcon />} a="Delete" />
            <Big w={42} icon={<FormatIcon />} a="Format" />
          </GroupBody>
          <GroupFoot label="Cells" />
        </Group>

        <Group $w={144}>
          <GroupBody $pl={10}>
            <SmallStack $gap={0} $pt={5} $w={36}>
              <StackItem $h={23}><SigmaIcon /><Caret $w={20}><Chevron /></Caret></StackItem>
              <StackItem $h={23}><FillDownIcon /><Caret $w={18}><Chevron /></Caret></StackItem>
              <StackItem $h={23}><EraserIcon /><Caret $w={17}><Chevron /></Caret></StackItem>
            </SmallStack>
            <Big w={41} icon={<SortIcon />} a="Sort &" b="Filter" />
            <Big w={47} icon={<FindIcon />} a="Find &" b="Select" />
          </GroupBody>
          <GroupFoot label="Editing" />
        </Group>

        <Group $w={61}>
          <GroupBody>
            <Big w={60} icon={<AnalyzeIcon />} a="Analyze" b="Data" noB />
          </GroupBody>
          <GroupFoot label="Analysis" />
        </Group>

        <Group $w={73}>
          <GroupBody>
            <Big w={72} icon={<SensitivityIcon />} a="Sensitivity" off />
          </GroupBody>
          <GroupFoot label="Sensitivity" />
        </Group>

        <Group $w={131}>
          <GroupBody $pl={13}>
            <SmallStack $gap={0} $pt={4}>
              <StackItem $h={23.500}><PdfIcon /><InlineText $ml={5}>Create PDF</InlineText></StackItem>
              <StackItem $h={23.500}><GearIcon /><InlineText $ml={3}>Change Settings</InlineText></StackItem>
              <StackItem $h={23.500}><BatchIcon /><InlineText $ml={3}>Batch PDF</InlineText></StackItem>
            </SmallStack>
          </GroupBody>
          <GroupFoot label="Bluebeam" />
        </Group>

        <Collapse>
          <Svg width="12" height="7" viewBox="0 0 12 7"><path d="M1 6l5-5 5 5" fill="none" stroke="#555" /></Svg>
        </Collapse>
      </Ribbon>

      <FormulaArea>
        <FieldBox $w={100} $ml={0}>
          <NamePad>Print_Area</NamePad>
          <NameArrow><Tri d="down" s={6} /></NameArrow>
        </FieldBox>
        <Grip />
        <FieldBox $w={108} $ml={15}>
          <FxSlot><Cross /></FxSlot>
          <FxSlot><Check /></FxSlot>
          <FxSlot><FxText>fx</FxText></FxSlot>
        </FieldBox>
        <FieldBox $grow $ml={4}>
          <FormulaText>Nominal</FormulaText>
          <EndArrow><Chevron /></EndArrow>
        </FieldBox>
      </FormulaArea>

      <SheetArea>
        <Sheet />
        <VScroll>
          <VCap />
          <ScrollBtn><Tri d="up" /></ScrollBtn>
          <VThumb />
          <VGap />
          <ScrollBtn><Tri d="down" /></ScrollBtn>
        </VScroll>
      </SheetArea>

      <SheetBar>
        <NavArrows><Tri d="left" c="#c4c4c4" /><Tri d="right" c="#c4c4c4" /></NavArrows>
        <SheetTab>Pipe Size Schedule</SheetTab>
        <AddSheet><PlusCircle /></AddSheet>
        <BarGrip />
        <HScroll>
          <HBtn><Tri d="left" c="#555" /></HBtn>
          <HThumb />
          <HTrack />
          <HBtn><Tri d="right" c="#555" /></HBtn>
        </HScroll>
      </SheetBar>

      <Status>
        <StatusItem $w={854}>Ready</StatusItem>
        <StatusItem $w={119}>Average: 14.29617284</StatusItem>
        <StatusItem $w={65}>Count: 126</StatusItem>
        <StatusItem $w={82}>Sum: 1157.99</StatusItem>
        <DisplayIcon />
        <StatusItem $w={92} $ml={2}>Display Settings</StatusItem>
        <ViewBtn $w={38} $on><NormalViewIcon /></ViewBtn>
        <ViewBtn $w={38} $ml={4}><PageViewIcon /></ViewBtn>
        <ViewBtn $w={38} $ml={2}><BreakViewIcon /></ViewBtn>
        <StatusItem $ml={5} $big>−</StatusItem>
        <Slider />
        <StatusItem $ml={4} $big>+</StatusItem>
        <StatusItem $ml={13}>100%</StatusItem>
      </Status>
    </Page>
  );
}
